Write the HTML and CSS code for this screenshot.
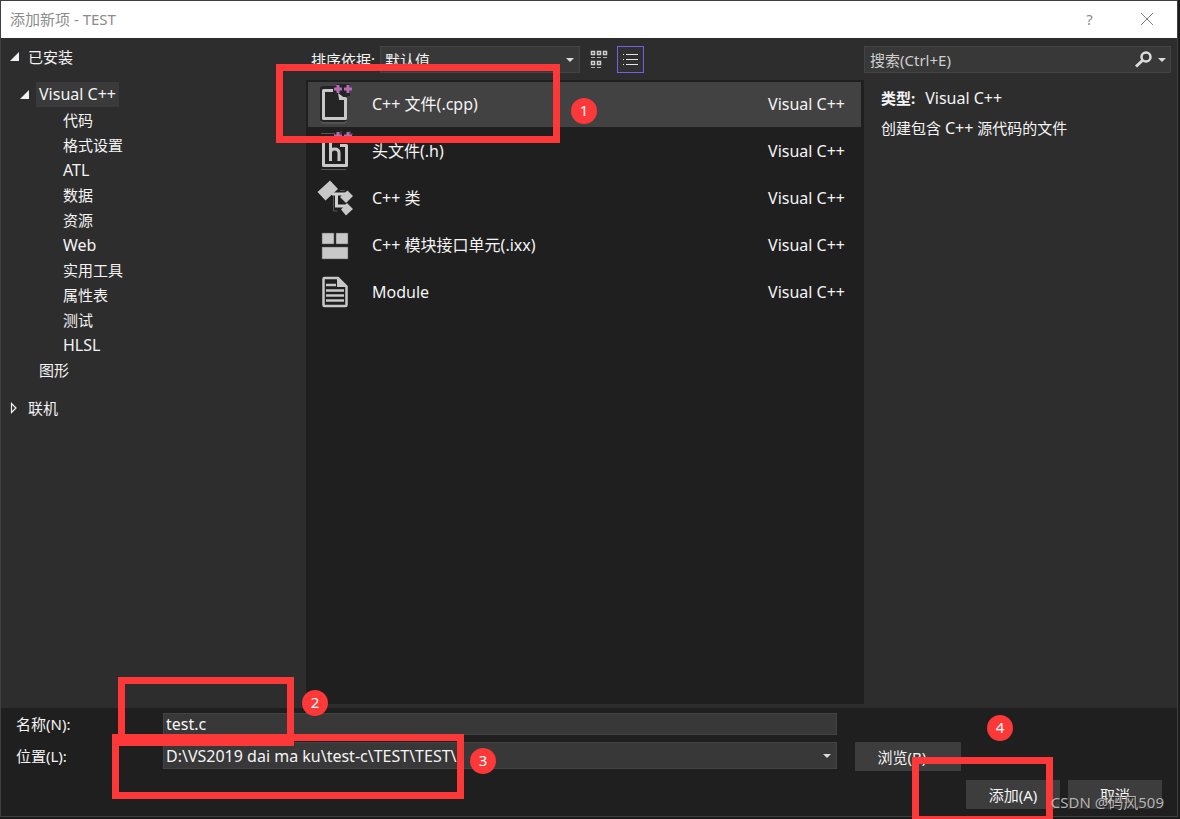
FILE: index.html
```html
<!DOCTYPE html>
<html lang="zh-CN">
<head>
<meta charset="utf-8">
<title>添加新项 - TEST</title>
<link rel="stylesheet" href="styles.css">
</head>
<body>
<div class="dialog">
  <header class="titlebar">
    <h1 class="title">添加新项 - TEST</h1>
    <button class="title-btn" type="button">?</button>
    <button class="title-btn" type="button" aria-label="关闭">
      <svg width="14" height="14" viewBox="0 0 14 14"><path d="M1 1l12 12M13 1L1 13" stroke="#808080" fill="none"/></svg>
    </button>
  </header>

  <main class="content">
    <nav class="tree" aria-label="模板类别">
      <button class="node root" type="button"><svg width="9" height="9" viewBox="0 0 9 9"><path d="M9 0v9H0z" fill="#f1f1f1"/></svg><span>已安装</span></button>
      <div class="group">
        <button class="node branch" type="button"><svg width="9" height="9" viewBox="0 0 9 9"><path d="M9 0v9H0z" fill="#f1f1f1"/></svg><span class="current latin">Visual C++</span></button>
        <ul class="leaves">
          <li><button class="node" type="button">代码</button></li>
          <li><button class="node" type="button">格式设置</button></li>
          <li><button class="node latin" type="button">ATL</button></li>
          <li><button class="node" type="button">数据</button></li>
          <li><button class="node" type="button">资源</button></li>
          <li><button class="node latin" type="button">Web</button></li>
          <li><button class="node" type="button">实用工具</button></li>
          <li><button class="node" type="button">属性表</button></li>
          <li><button class="node" type="button">测试</button></li>
          <li><button class="node latin" type="button">HLSL</button></li>
        </ul>
        <button class="node sibling" type="button">图形</button>
      </div>
      <button class="node root" type="button"><svg width="9" height="12" viewBox="0 0 9 12"><path d="M1.500 1.500v9L6 6z" fill="none" stroke="#f1f1f1" stroke-width="1.200"/></svg><span>联机</span></button>
    </nav>

    <section class="center">
      <div class="toolbar">
        <label for="sort">排序依据:</label>
        <div class="combo sort">
          <select id="sort"><option>默认值</option></select>
          <svg class="caret" width="8" height="4" viewBox="0 0 8 4"><path d="M0 0h8L4 4z" fill="#dcdcdc"/></svg>
        </div>
        <button class="view" type="button" aria-label="中等图标">
          <svg width="18" height="20" viewBox="0 0 18 20"><g fill="none" stroke="#d0d0d0" stroke-width="1.500"><path d="M1.500 1.500h3v3h-3zM7.500 1.500h3v3h-3zM13.500 1.500h3v3h-3zM1.500 11.500h3v3h-3zM7.500 11.500h3v3h-3z"/></g><path d="M1 7h4v1H1zM7 7h4v1H7zM13 7h4v1h-4zM1 17h4v1H1zM7 17h4v1H7z" fill="#b0b0b0"/></svg>
        </button>
        <button class="view active" type="button" aria-label="小图标">
          <svg width="15" height="13" viewBox="0 0 15 13"><path d="M0 1h1v1H0zM3 1h12v1H3zM0 6h1v1H0zM3 6h12v1H3zM0 11h1v1H0zM3 11h12v1H3z" fill="#e4e4e4"/></svg>
        </button>
      </div>
      <ul class="templates">
        <li><button class="item selected" type="button">
          <svg width="38" height="40" viewBox="0 0 38 40"><path d="M7 2h14v-2h13v12h-3v23q0 3-3 3H7q-3 0-3-3V5q0-3 3-3z" fill="#252525"/><path d="M5 37q0 2 3 2h20q2 0 2-2" fill="none" stroke="#666"/><path d="M17 6.500H7.500V34.500H29.500V14.500H23" fill="none" stroke="#c8c8c8" stroke-width="3" stroke-linejoin="round"/><path d="M22 9l8 6h-7z" fill="#c8c8c8"/><path d="M18 5h8M22 1v8M28 5h8M32 1v8" stroke="#b56cb5" stroke-width="3"/></svg>
          <span class="name">C++ 文件(.cpp)</span><span class="lang">Visual C++</span></button></li>
        <li><button class="item" type="button">
          <svg width="38" height="40" viewBox="0 0 38 40"><path d="M5 2.500h14M5 38.500h25M25 0v3M34 0v3h3" fill="none" stroke="#565656"/><path d="M17 6.500H7.500V34.500H30.500V14.500H24" fill="none" stroke="#c8c8c8" stroke-width="3" stroke-linejoin="round"/><path d="M18 5h8M22 1v8M28 5h8M32 1v8" stroke="#b56cb5" stroke-width="3"/><path d="M14.500 12v18M14.500 22q0-4 4-4 4.500 0 4.500 4v8" fill="none" stroke="#c8c8c8" stroke-width="3"/></svg>
          <span class="name">头文件(.h)</span><span class="lang">Visual C++</span></button></li>
        <li><button class="item" type="button">
          <svg width="38" height="40" viewBox="0 0 38 40"><path d="M17.500 17v16h4M24 12.500h5" fill="none" stroke="#555"/><path d="M16 16h15M20.500 16v12H30" fill="none" stroke="#d0d0d0" stroke-width="3"/><path d="M14 2.500L22 11 9.500 22.500 1.500 14zM31.500 12.500l5.500 5.500-7 7-6-6zM31 25l6 6-7 6.500-5-6z" fill="#c8c8c8"/></svg>
          <span class="name">C++ 类</span><span class="lang">Visual C++</span></button></li>
        <li><button class="item" type="button">
          <svg width="38" height="40" viewBox="0 0 38 40"><path d="M6 8h12v11H6zM20 8h12v11H20zM6 22h26v12H6z" fill="#c8c8c8" stroke="#555" stroke-width=".500"/></svg>
          <span class="name">C++ 模块接口单元(.ixx)</span><span class="lang">Visual C++</span></button></li>
        <li><button class="item" type="button">
          <svg width="38" height="40" viewBox="0 0 38 40"><path d="M8.500 6H22l8.500 8.500V33q0 1-1 1h-21q-1 0-1-1V7q0-1 1-1z" fill="none" stroke="#c8c8c8" stroke-width="2.500"/><path d="M21 6v9h10z" fill="#c8c8c8"/><path d="M10 13h10M10 18.500h18M10 23.500h18M10 28.500h18" stroke="#c8c8c8" stroke-width="2.500"/></svg>
          <span class="name">Module</span><span class="lang">Visual C++</span></button></li>
      </ul>
    </section>

    <aside class="details">
      <div class="search">
        <input type="text" aria-label="搜索" placeholder="搜索(Ctrl+E)">
        <svg width="17" height="17" viewBox="0 0 17 17"><circle cx="11" cy="6" r="4.500" fill="none" stroke="#dcdcdc" stroke-width="2.500"/><path d="M8 9l-7 6.500" stroke="#dcdcdc" stroke-width="3"/></svg>
        <svg width="8" height="4" viewBox="0 0 8 4"><path d="M0 0h8L4 4z" fill="#dcdcdc"/></svg>
      </div>
      <p class="kind"><b>类型:</b><span class="latin">Visual C++</span></p>
      <p class="about">创建包含 <span class="latin">C++</span> 源代码的文件</p>
    </aside>
  </main>

  <footer class="form">
    <label for="name">名称(N):</label>
    <input class="field latin" id="name" type="text" value="test.c">
    <label class="second" for="location">位置(L):</label>
    <div class="combo location latin">
      <select id="location"><option>D:\VS2019 dai ma ku\test-c\TEST\TEST\</option></select>
      <svg class="caret" width="8" height="4" viewBox="0 0 8 4"><path d="M0 0h8L4 4z" fill="#dcdcdc"/></svg>
    </div>
    <button class="push browse" type="button">浏览(B)...</button>
    <div class="actions">
      <button class="push" type="button">添加(A)</button>
      <button class="push" type="button">取消</button>
    </div>
  </footer>
</div>

<div class="marks">
  <div class="frame frame-1"></div>
  <div class="frame frame-2"></div>
  <div class="frame frame-3"></div>
  <div class="frame frame-4"></div>
  <span class="step step-1">1</span>
  <span class="step step-2">2</span>
  <span class="step step-3">3</span>
  <span class="step step-4">4</span>
  <span class="credit">CSDN @码风509</span>
</div>
</body>
</html>
```
FILE: styles.css
```css
* { box-sizing: border-box; }
body {
  margin: 0;
  height: 100vh;
  overflow: hidden;
  position: relative;
  background: #1b1b1b;
  color: #f4f4f4;
  font: 15px/20px "Noto Sans", "Noto Sans CJK SC", sans-serif;
  padding: 0 2px 2px 0;
}
button, input, select { font: inherit; color: inherit; border: 0; margin: 0; padding: 0; background: none; border-radius: 0; }
ul, p, h1 { margin: 0; padding: 0; list-style: none; }
svg { display: block; flex: none; }
.latin { font-size: 16px; }

.dialog { height: 100%; display: flex; flex-direction: column; border: 1px solid #3f3f3f; background: #2d2d2d; }
.titlebar { height: 37px; flex: none; display: flex; align-items: center; background: #fff; color: #8c8c8c; padding: 0 2px 2px 9px; }
.title { flex: 1; font-size: 15px; font-weight: 400; }
.title-btn { width: 57px; height: 35px; display: flex; align-items: center; justify-content: center; }

.content { flex: 1; min-height: 0; display: flex; }
.tree { width: 305px; flex: none; padding-top: 6px; }
.node { display: flex; align-items: center; height: 25px; }
.root { gap: 9px; padding-left: 9px; }
.group { padding: 13px 0 13px 19px; }
.branch { gap: 7px; }
.current { height: 25px; line-height: 25px; padding: 0 3px; background: #3a3a3a; }
.leaves { padding-left: 43px; }
.sibling { padding-left: 19px; }

.center { flex: 1; min-width: 0; display: flex; flex-direction: column; padding: 8px 0 4px; }
.toolbar { display: flex; align-items: center; height: 27px; padding-left: 5px; margin-bottom: 7px; flex: none; }
.combo { position: relative; background: #383838; border: 1px solid #434346; }
.combo select { width: 100%; height: 100%; appearance: none; padding: 0 24px 0 4px; outline: 0; }
.caret { position: absolute; right: 5px; top: 11px; pointer-events: none; }
.sort { width: 200px; height: 27px; margin-left: 5px; }
.view { width: 27px; height: 27px; display: flex; align-items: center; justify-content: center; border: 1px solid transparent; margin-left: 5px; }
.view.active { border-color: #7160e8; background: #303030; }
.templates { flex: 1; min-height: 0; background: #1f1f1f; padding: 2px 3px 0 2px; }
.item { display: flex; align-items: center; width: 100%; height: 45px; margin-bottom: 2px; padding: 0 16px 2px 8px; text-align: left; font-size: 16px; }
.item.selected { background: #424242; }
.name { flex: 1; padding-left: 18px; }

.details { width: 313px; flex: none; padding: 8px 6px 0 0; }
.search { display: flex; align-items: center; height: 27px; background: #383838; border: 1px solid #434346; padding: 0 4px 0 5px; gap: 6px; }
.search input { flex: 1; min-width: 0; height: 25px; outline: 0; }
.search input::placeholder { color: #cfcfcf; opacity: 1; }
.kind { display: flex; gap: 10px; padding: 15px 0 0 17px; }
.about { padding: 10px 0 0 17px; }

.form {
  flex: none;
  display: grid;
  grid-template-columns: 129px minmax(0, 1fr) 106px;
  column-gap: 18px;
  align-items: center;
  background: #1f1f1f;
  padding: 5px 216px 7px 15px;
}
.form label { white-space: nowrap; }
.field { grid-column: 2; width: 100%; height: 22px; background: #383838; border: 1px solid #434346; padding: 0 2px; outline: 0; }
.location { height: 27px; margin-top: 5px; }
.location select { padding-left: 2px; }
.form .second { grid-column: 1; margin-top: 6px; }
.push { height: 29px; background: #3d3d3d; text-align: center; }
.browse { margin-top: 7px; }
.actions { grid-column: 3; display: flex; gap: 8px; padding-top: 9px; margin: 0 -201px 0 111px; }
.actions .push { width: 94px; flex: none; }

.marks { position: absolute; inset: 0; overflow: hidden; pointer-events: none; }
.frame { position: absolute; border: 7px solid #fc3838; }
.frame-1 { left: 276px; top: 64px; width: 284px; height: 79px; }
.frame-2 { left: 118px; top: 677px; width: 176px; height: 69px; }
.frame-3 { left: 112px; top: 734px; width: 352px; height: 65px; }
.frame-4 { left: 912px; top: 757px; width: 141px; height: 66px; }
.step { position: absolute; width: 26px; height: 26px; line-height: 24px; border-radius: 50%; background: #fc3838; color: #fff; text-align: center; }
.step-1 { left: 571px; top: 98px; }
.step-2 { left: 302px; top: 690px; }
.step-3 { left: 470px; top: 748px; }
.step-4 { left: 987px; top: 715px; }
.credit { position: absolute; right: 16px; bottom: 7px; font-size: 15px; color: #b4b4b4; text-shadow: 1px 1px 1px #222; }
```
